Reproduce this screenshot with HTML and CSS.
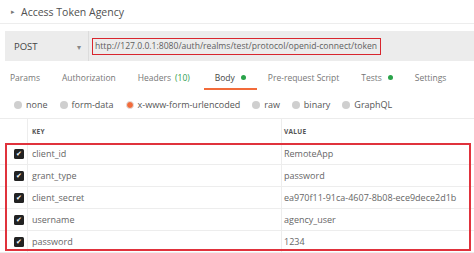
FILE: index.html
```html
<!DOCTYPE html>
<html lang="en">
<head>
    <meta charset="UTF-8">
    <title>Access Token Agency</title>
    <link rel="stylesheet" href="styles.css">
</head>
<body>

<div class="title">
    <span class="caret">&#9656;</span>
    <span>Access Token Agency</span>
</div>

<div class="request">
    <div class="method">
        <span>POST</span>
        <span class="drop">&#9662;</span>
    </div>
    <div class="url-wrap">
        <div class="url">http://127.0.0.1:8080/auth/realms/test/protocol/openid-connect/token</div>
    </div>
</div>

<div class="tabs">
    <span class="tab">Params</span>
    <span class="tab">Authorization</span>
    <span class="tab">Headers <span class="count">(10)</span></span>
    <span class="tab active">Body <span class="dot"></span></span>
    <span class="tab">Pre-request Script</span>
    <span class="tab">Tests <span class="dot"></span></span>
    <span class="tab">Settings</span>
</div>

<div class="modes">
    <span class="mode"><span class="radio"></span>none</span>
    <span class="mode"><span class="radio"></span>form-data</span>
    <span class="mode"><span class="radio on"></span>x-www-form-urlencoded</span>
    <span class="mode"><span class="radio"></span>raw</span>
    <span class="mode"><span class="radio"></span>binary</span>
    <span class="mode"><span class="radio"></span>GraphQL</span>
</div>

<div class="table">
    <div class="row head">
        <div class="cell check"></div>
        <div class="cell key">KEY</div>
        <div class="cell value">VALUE</div>
    </div>
    <div class="rows" id="rows"></div>
</div>

<script>
    const params = [
        ['client_id', 'RemoteApp'],
        ['grant_type', 'password'],
        ['client_secret', 'ea970f11-91ca-4607-8b08-ece9dece2d1b'],
        ['username', 'agency_user'],
        ['password', '1234']
    ];

    const rows = document.getElementById('rows');
    params.forEach(p => {
        const row = document.createElement('div');
        row.className = 'row';
        row.innerHTML = `
            <div class="cell check"><span class="box">&#10004;</span></div>
            <div class="cell key">${p[0]}</div>
            <div class="cell value">${p[1]}</div>
        `;
        rows.appendChild(row);
    });
</script>

</body>
</html>
```

FILE: styles.css
```css
body {
    margin: 0;
    font-family: 'Open Sans', sans-serif;
    color: #555;
    background: #fff;
    height: 253px;
    overflow: hidden;
}

/* Заголовок запроса */
.title {
    height: 23px;
    border-bottom: 1px solid #ededed;
    display: flex;
    align-items: center;
    padding-left: 11px;
    font-size: 10.5px;
    color: #505050;
}
.title .caret {
    font-size: 7px;
    color: #777;
    margin-right: 6px;
}

/* Строка метода и адреса */
.request {
    margin: 7px 0 0 5px;
    height: 30px;
    background: #ececec;
    display: flex;
}
.method {
    width: 84px;
    box-sizing: border-box;
    padding: 0 7px 0 9px;
    display: flex;
    align-items: center;
    justify-content: space-between;
    font-size: 9.5px;
    color: #444;
    border-right: 1px solid #dcdcdc;
}
.method .drop {
    font-size: 8px;
    color: #888;
}
.url-wrap {
    display: flex;
    align-items: center;
    padding-left: 3px;
}
.url {
    border: 1.5px solid #d8262e;
    height: 15px;
    line-height: 15px;
    padding: 0 3px 0 2px;
    font-size: 8.6px;
    color: #606060;
}

/* Вкладки */
.tabs {
    display: flex;
    padding-left: 10px;
    height: 27px;
    align-items: center;
    margin-top: 3px;
    font-size: 8.5px;
    color: #777;
}
.tab {
    position: relative;
    margin-right: 22px;
    display: flex;
    align-items: center;
    height: 100%;
}
.tab .count {
    color: #2f9e4f;
    margin-left: 4px;
    margin-right: 3px;
}
.tab.active {
    color: #444;
}
.tab.active::after {
    content: '';
    position: absolute;
    left: -11px;
    right: -11px;
    bottom: 1px;
    height: 2px;
    background: #f26b3a;
}
.dot {
    width: 5px;
    height: 5px;
    border-radius: 50%;
    background: #2aa34a;
    margin-left: 6px;
}

/* Типы тела */
.modes {
    display: flex;
    align-items: center;
    height: 27px;
    padding-left: 14px;
    border-bottom: 1px solid #ececec;
    font-size: 9px;
    color: #555;
}
.mode {
    display: flex;
    align-items: center;
    margin-right: 12px;
}
.radio {
    width: 8px;
    height: 8px;
    border-radius: 50%;
    background: #cfcfcf;
    margin-right: 4px;
    box-sizing: border-box;
}
.radio.on {
    background: #f26b3a;
    border: 1.5px solid #e0e0e0;
}

/* Таблица параметров */
.table {
    font-size: 9px;
}
.row {
    display: flex;
    height: 22px;
    box-sizing: border-box;
    align-items: stretch;
    border-bottom: 1px solid #ededed;
}
.row.head {
    height: 24px;
    font-size: 6.5px;
    font-weight: bold;
    color: #555;
    letter-spacing: 0.3px;
    border-bottom: none;
}
.cell {
    display: flex;
    align-items: center;
}
.cell.check {
    width: 28px;
    box-sizing: border-box;
    border-right: 1px solid #ededed;
    padding-left: 14px;
}
.cell.key {
    width: 254px;
    box-sizing: border-box;
    padding-left: 4px;
    border-right: 1px solid #ededed;
}
.cell.value {
    flex: 1;
    padding-left: 2px;
}
.rows {
    position: relative;
    color: #666;
}
/* красная рамка-выделение поверх строк */
.rows::after {
    content: '';
    position: absolute;
    top: 0;
    left: 5px;
    right: 3px;
    bottom: 2px;
    border: 2px solid #e0323c;
}
.box {
    width: 10px;
    height: 10px;
    border-radius: 1.5px;
    background: #222;
    color: #fff;
    font-size: 7px;
    line-height: 10px;
    text-align: center;
}
```
